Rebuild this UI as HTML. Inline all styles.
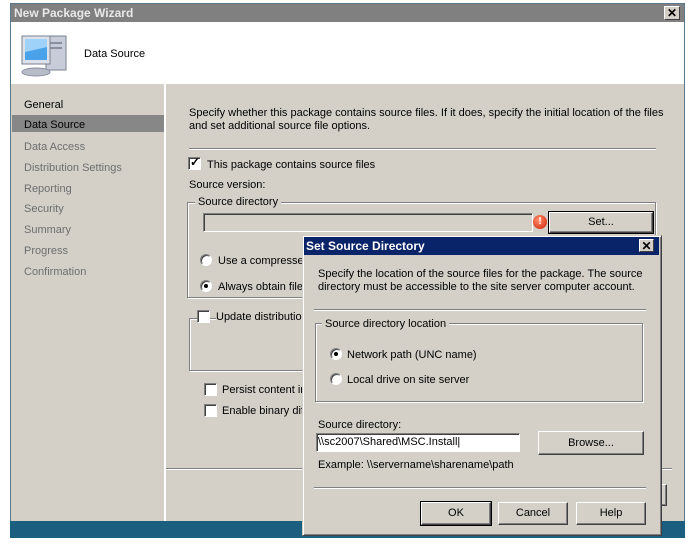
<!DOCTYPE html>
<html><head><meta charset="utf-8"><style>
*{margin:0;padding:0;box-sizing:border-box}
body{width:694px;height:544px;background:#fff;position:relative;overflow:hidden;font-family:"Liberation Sans",Tahoma,sans-serif;font-size:11px;color:#000}
.a{position:absolute;white-space:nowrap}
.btn{position:absolute;background:#d4d0c8;border:1px solid;border-color:#fff #404040 #404040 #fff;box-shadow:inset -1px -1px 0 #808080;text-align:center;font-size:11px}
.def{outline:1px solid #000}
.cb{position:absolute;width:13px;height:13px;background:#fff;border:1px solid;border-color:#808080 #fff #fff #808080;box-shadow:inset 1px 1px 0 #404040}
.rb{position:absolute;width:12px;height:12px;border-radius:50%;background:#fff;border:1px solid;border-color:#808080 #fff #fff #808080;box-shadow:inset 1px 1px 0 #404040}
.rb.on::after{content:"";position:absolute;left:3px;top:3px;width:4px;height:4px;border-radius:50%;background:#000}
.grp{position:absolute;border:1px solid #808080;box-shadow:1px 1px 0 #fff,inset 1px 1px 0 #fff}
.leg{position:absolute;background:#d4d0c8;padding:0 3px}
.sep{position:absolute;height:2px;border-top:1px solid #808080;border-bottom:1px solid #fff}
.x{position:absolute;background:#d4d0c8;border:1px solid;border-color:#fff #404040 #404040 #fff;font-weight:bold;font-size:12px;line-height:12px;text-align:center}
.s{color:#6e6e6e}
</style></head><body>
<div class="a" style="left:10px;top:3px;width:675px;height:535px;background:#d4d0c8;border:1px solid #5a7a8c"></div>
<div class="a" style="left:11px;top:4px;width:673px;height:18px;background:#808080;color:#e8e8e8;font-weight:bold;font-size:12px;padding:2px 3px">New Package Wizard</div>
<div class="x" style="left:664px;top:6px;width:16px;height:14px">✕</div>
<div class="a" style="left:11px;top:22px;width:673px;height:62px;background:#fff"></div>
<svg class="a" style="left:18px;top:30px" width="54" height="50" viewBox="0 0 54 50">
<rect x="28" y="6" width="20" height="34" fill="#c8ccd8" stroke="#7a8090"/>
<rect x="32" y="12" width="12" height="2" fill="#8890a0"/><rect x="32" y="17" width="12" height="2" fill="#8890a0"/>
<ellipse cx="18" cy="42" rx="14" ry="4" fill="#b8bcc8" stroke="#8890a0"/>
<rect x="4" y="6" width="28" height="28" fill="#dde2ea" stroke="#7a8090"/>
<rect x="7" y="9" width="22" height="21" fill="#4aa3ea"/>
<path d="M7 9h22v8L7 22z" fill="#9fd2f8"/>
</svg>
<div class="a" style="left:84px;top:48px">Data Source</div>
<div class="a" style="left:164px;top:84px;width:2px;height:437px;background:#fff"></div>
<div class="a" style="left:12px;top:115px;width:152px;height:17px;background:#878787"></div>
<div class="a" style="left:24px;top:99px">General</div>
<div class="a" style="left:24px;top:119px">Data Source</div>
<div class="a s" style="left:24px;top:141px">Data Access</div>
<div class="a s" style="left:24px;top:162px">Distribution Settings</div>
<div class="a s" style="left:24px;top:183px">Reporting</div>
<div class="a s" style="left:24px;top:203px">Security</div>
<div class="a s" style="left:24px;top:224px">Summary</div>
<div class="a s" style="left:24px;top:245px">Progress</div>
<div class="a s" style="left:24px;top:266px">Confirmation</div>
<div class="a" style="left:189px;top:107px;line-height:13px">Specify whether this package contains source files. If it does, specify the initial location of the files<br>and set additional source file options.</div>
<div class="sep" style="left:189px;top:148px;width:467px"></div>
<div class="cb" style="left:188px;top:157px"></div><div class="a" style="left:190px;top:155px;font-size:12px;font-weight:bold">✓</div>
<div class="a" style="left:207px;top:159px">This package contains source files</div>
<div class="a" style="left:189px;top:179px">Source version:</div>
<div class="grp" style="left:187px;top:202px;width:469px;height:96px"></div>
<div class="leg" style="left:195px;top:196px">Source directory</div>
<div class="a" style="left:203px;top:213px;width:330px;height:19px;background:#d4d0c8;border:1px solid;border-color:#808080 #fff #fff #808080;box-shadow:inset 1px 1px 0 #404040"></div>
<div class="a" style="left:533px;top:215px;width:14px;height:14px;border-radius:50%;background:radial-gradient(circle at 40% 35%,#ff9070,#d02000);color:#fff;font-weight:bold;font-size:10px;text-align:center;line-height:14px">!</div>
<div class="btn def" style="left:549px;top:212px;width:104px;height:21px;line-height:19px">Set...</div>
<div class="rb" style="left:200px;top:254px"></div><div class="a" style="left:218px;top:255px">Use a compressed</div>
<div class="rb on" style="left:200px;top:280px"></div><div class="a" style="left:218px;top:281px">Always obtain files</div>
<div class="grp" style="left:189px;top:318px;width:140px;height:53px"></div>
<div class="cb" style="left:197px;top:310px"></div><div class="a" style="left:216px;top:311px;background:#d4d0c8;padding-right:3px">Update distribution</div>
<div class="cb" style="left:204px;top:383px"></div><div class="a" style="left:222px;top:384px">Persist content in</div>
<div class="cb" style="left:204px;top:404px"></div><div class="a" style="left:222px;top:405px">Enable binary diff</div>
<div class="sep" style="left:166px;top:468px;width:506px"></div>
<div class="btn" style="left:600px;top:484px;width:67px;height:22px"></div>
<div class="a" style="left:10px;top:521px;width:675px;height:17px;background:#1b5e80"></div>
<div class="a" style="left:302px;top:235px;width:360px;height:301px;background:#d4d0c8;border:1px solid;border-color:#d4d0c8 #404040 #404040 #d4d0c8;box-shadow:inset 1px 1px 0 #fff,inset -1px -1px 0 #808080"></div>
<div class="a" style="left:304px;top:237px;width:355px;height:18px;background:#0a246a;color:#fff;font-weight:bold;font-size:12px;padding:2px 2px">Set Source Directory</div>
<div class="x" style="left:639px;top:239px;width:15px;height:13px">✕</div>
<div class="a" style="left:318px;top:268px;line-height:13px">Specify the location of the source files for the package. The source<br>directory must be accessible to the site server computer account.</div>
<div class="sep" style="left:314px;top:309px;width:332px"></div>
<div class="grp" style="left:315px;top:323px;width:328px;height:79px"></div>
<div class="leg" style="left:322px;top:318px">Source directory location</div>
<div class="rb on" style="left:330px;top:348px"></div><div class="a" style="left:347px;top:349px">Network path (UNC name)</div>
<div class="rb" style="left:330px;top:373px"></div><div class="a" style="left:347px;top:374px">Local drive on site server</div>
<div class="a" style="left:318px;top:419px">Source directory:</div>
<div class="a" style="left:316px;top:433px;width:204px;height:19px;background:#fff;border:1px solid;border-color:#808080 #fff #fff #808080;box-shadow:inset 1px 1px 0 #404040;padding:2px 1px">\\sc2007\Shared\MSC.Install|</div>
<div class="btn" style="left:538px;top:431px;width:106px;height:24px;line-height:22px">Browse...</div>
<div class="a" style="left:318px;top:459px">Example: \\servername\sharename\path</div>
<div class="sep" style="left:314px;top:487px;width:332px"></div>
<div class="btn def" style="left:421px;top:502px;width:70px;height:23px;line-height:21px">OK</div>
<div class="btn" style="left:498px;top:502px;width:70px;height:23px;line-height:21px">Cancel</div>
<div class="btn" style="left:576px;top:502px;width:70px;height:23px;line-height:21px">Help</div>
</body></html>
